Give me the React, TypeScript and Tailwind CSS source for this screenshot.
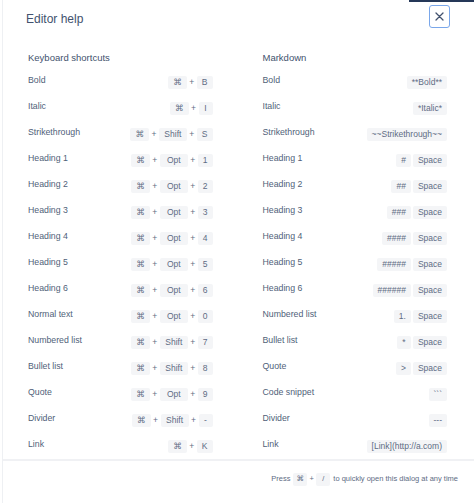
import type { ReactNode } from 'react';

type Combo = { keys: string[]; plus?: boolean };

const SHORTCUTS: { label: string; keys: string[] }[] = [
  { label: 'Bold', keys: ['⌘', 'B'] },
  { label: 'Italic', keys: ['⌘', 'I'] },
  { label: 'Strikethrough', keys: ['⌘', 'Shift', 'S'] },
  { label: 'Heading 1', keys: ['⌘', 'Opt', '1'] },
  { label: 'Heading 2', keys: ['⌘', 'Opt', '2'] },
  { label: 'Heading 3', keys: ['⌘', 'Opt', '3'] },
  { label: 'Heading 4', keys: ['⌘', 'Opt', '4'] },
  { label: 'Heading 5', keys: ['⌘', 'Opt', '5'] },
  { label: 'Heading 6', keys: ['⌘', 'Opt', '6'] },
  { label: 'Normal text', keys: ['⌘', 'Opt', '0'] },
  { label: 'Numbered list', keys: ['⌘', 'Shift', '7'] },
  { label: 'Bullet list', keys: ['⌘', 'Shift', '8'] },
  { label: 'Quote', keys: ['⌘', 'Opt', '9'] },
  { label: 'Divider', keys: ['⌘', 'Shift', '-'] },
  { label: 'Link', keys: ['⌘', 'K'] },
];

const MARKDOWN: { label: string; keys: string[] }[] = [
  { label: 'Bold', keys: ['**Bold**'] },
  { label: 'Italic', keys: ['*Italic*'] },
  { label: 'Strikethrough', keys: ['~~Strikethrough~~'] },
  { label: 'Heading 1', keys: ['#', 'Space'] },
  { label: 'Heading 2', keys: ['##', 'Space'] },
  { label: 'Heading 3', keys: ['###', 'Space'] },
  { label: 'Heading 4', keys: ['####', 'Space'] },
  { label: 'Heading 5', keys: ['#####', 'Space'] },
  { label: 'Heading 6', keys: ['######', 'Space'] },
  { label: 'Numbered list', keys: ['1.', 'Space'] },
  { label: 'Bullet list', keys: ['*', 'Space'] },
  { label: 'Quote', keys: ['>', 'Space'] },
  { label: 'Code snippet', keys: ['```'] },
  { label: 'Divider', keys: ['---'] },
  { label: 'Link', keys: ['[Link](http://a.com)'] },
];

function Key({ children, small }: { children: ReactNode; small?: boolean }) {
  const wide = children === 'Opt' || children === 'Shift';
  return (
    <span
      className={
        small
          ? 'flex h-[13px] min-w-[12px] items-center justify-center rounded-[2px] bg-[#f4f5f7] px-[3px] text-[7.5px] text-[#5e6c84]'
          : `flex h-[13px] min-w-[14px] items-center justify-center rounded-[2px] bg-[#f4f5f7] px-[5px] text-[8.5px] text-[#5e6c84] ${wide ? 'w-[28px]' : ''}`
      }
    >
      {children}
    </span>
  );
}

function KeyCombo({ keys, plus = true }: Combo) {
  return (
    <div className={`flex items-center pt-[3px] ${plus ? 'gap-[2.5px]' : 'gap-[2px]'}`}>
      {keys.map((k, i) => (
        <span key={i} className="flex items-center gap-[2.5px]">
          {plus && i > 0 && <span className="text-[8.5px] text-[#5e6c84]">+</span>}
          <Key>{k}</Key>
        </span>
      ))}
    </div>
  );
}

function Column({
  title,
  rows,
  plus,
}: {
  title: string;
  rows: { label: string; keys: string[] }[];
  plus: boolean;
}) {
  return (
    <div className="flex flex-col">
      <div className="flex h-[20px] items-center text-[9.5px] text-[#42526e]">{title}</div>
      {rows.map((row) => (
        <div key={row.label} className="flex h-[26px] items-center justify-between">
          <span className="text-[8.75px] text-[#505f79]">{row.label}</span>
          <KeyCombo keys={row.keys} plus={plus} />
        </div>
      ))}
    </div>
  );
}

export default function App() {
  return (
    <div className="relative h-[503px] w-[474px] overflow-hidden bg-white font-['Liberation_Sans','DejaVu_Sans',sans-serif]">
      <div className="absolute right-0 top-0 h-[2px] w-[65px] bg-[#253858]" />
      <div className="ml-[2px] flex h-full flex-col border-l border-[#eef0f3]">
        <header className="flex items-start justify-between pl-[23px] pr-[24px] pt-[5px]">
          <h1 className="mt-[7px] text-[12px] leading-[15px] text-[#42526e]">Editor help</h1>
          <button className="flex h-[23px] w-[21px] items-center justify-center rounded-[3px] border-[1.5px] border-[#7aa7ea]">
            <svg width="9" height="9" viewBox="0 0 9 9" fill="none" stroke="#42526e" strokeWidth="1.3" strokeLinecap="round">
              <path d="M1 1l7 7M8 1L1 8" />
            </svg>
          </button>
        </header>

        <main className="mt-[20px] grid grid-cols-2 gap-x-[50px] pl-[25px] pr-[27px]">
          <Column title="Keyboard shortcuts" rows={SHORTCUTS} plus />
          <Column title="Markdown" rows={MARKDOWN} plus={false} />
        </main>

        <footer className="mt-[1px] flex h-[40px] items-center justify-end border-t-2 border-[#f0f1f4] pb-[2px] pr-[16px] text-[7.5px] text-[#5e6c84]">
          <span>Press</span>
          <span className="ml-[3px] flex items-center gap-[2.5px]">
            <Key small>⌘</Key>
            <span>+</span>
            <span className="min-w-[14px]">
              <Key small>/</Key>
            </span>
          </span>
          <span className="ml-[3px]">to quickly open this dialog at any time</span>
        </footer>
      </div>
    </div>
  );
}
